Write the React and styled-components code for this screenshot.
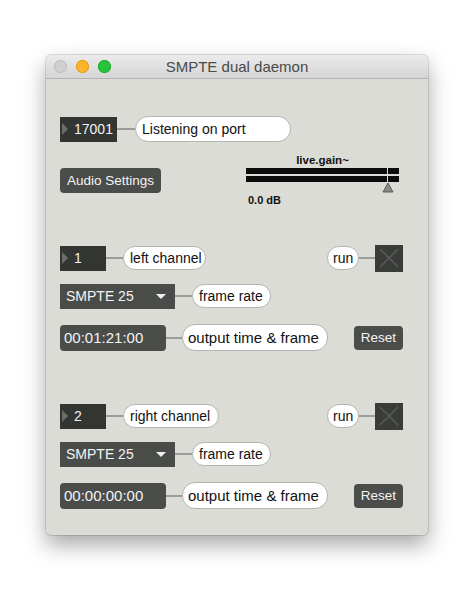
import styled, { createGlobalStyle } from 'styled-components';

const Global = createGlobalStyle`
  html, body {
    margin: 0;
    padding: 0;
    background: #ffffff;
    font-family: "Liberation Sans", Arial, sans-serif;
  }
`

const Page = styled.div`
  width: 474px;
  height: 590px;
  padding-top: 55px;
  box-sizing: border-box;
  display: flex;
  justify-content: center;
`

const Window = styled.div`
  width: 382px;
  height: 480px;
  border-radius: 5px;
  overflow: hidden;
  background: #dcdcd6;
  box-shadow: 0 10px 22px rgba(0,0,0,0.35), 0 0 0 1px rgba(0,0,0,0.12);
  display: flex;
  flex-direction: column;
`

const TitleBar = styled.div`
  height: 23px;
  flex-shrink: 0;
  background: linear-gradient(#ebebeb, #d5d5d5);
  border-bottom: 1px solid #b3b3b3;
  position: relative;
  display: flex;
  align-items: center;
  justify-content: center;
  color: #4a4a4a;
  font-size: 15px;
`

const Lights = styled.div`
  position: absolute;
  left: 8px;
  top: 5px;
  display: flex;
  gap: 9px;
`

const Light = styled.span`
  width: 13px;
  height: 13px;
  border-radius: 50%;
  background: ${p => p.color};
  box-shadow: inset 0 0 0 1px ${p => p.edge};
`

const Content = styled.div`
  flex: 1;
  padding: 37px 25px 0 14px;
  display: flex;
  flex-direction: column;
`

const Row = styled.div`
  display: flex;
  align-items: center;
  height: ${p => p.h || 26}px;
  margin-top: ${p => p.mt || 0}px;
`

const Spacer = styled.div`
  flex: 1;
`

const NumBox = styled.div`
  width: ${p => p.w}px;
  height: ${p => p.h || 25}px;
  background: #333533;
  color: #f2f2f2;
  font-size: 14px;
  display: flex;
  align-items: center;
  box-sizing: border-box;
  padding-left: 2px;
  flex-shrink: 0;
  &::before {
    content: "";
    width: 0;
    height: 0;
    border-top: 6px solid transparent;
    border-bottom: 6px solid transparent;
    border-left: 6px solid #6c6e6c;
    margin-right: 6px;
  }
`

const Wire = styled.div`
  width: ${p => p.w}px;
  height: 2px;
  background: #9c9c98;
  flex-shrink: 0;
`

const Bubble = styled.div`
  width: ${p => p.w}px;
  height: ${p => p.h || 24}px;
  box-sizing: border-box;
  background: #ffffff;
  border: 1px solid #b4b4b0;
  border-radius: 13px;
  color: #111;
  font-size: ${p => p.fs || 14}px;
  display: flex;
  align-items: center;
  padding-left: ${p => p.pl || 6}px;
  flex-shrink: 0;
  white-space: nowrap;
`

const DarkButton = styled.div`
  width: ${p => p.w}px;
  height: ${p => p.h || 25}px;
  background: #4b4d4b;
  border-radius: 4px;
  color: #f4f4f4;
  font-size: ${p => p.fs || 14}px;
  display: flex;
  align-items: center;
  justify-content: ${p => p.left ? 'flex-start' : 'center'};
  padding-left: ${p => p.left ? 4 : 0}px;
  margin-top: ${p => p.mt || 0}px;
  box-sizing: border-box;
  flex-shrink: 0;
  white-space: nowrap;
`

const Menu = styled.div`
  width: 115px;
  height: 25px;
  background: #4a4c4a;
  color: #f4f4f4;
  font-size: 14px;
  display: flex;
  align-items: center;
  justify-content: space-between;
  padding: 0 9px 0 6px;
  box-sizing: border-box;
  flex-shrink: 0;
`

const Caret = styled.span`
  width: 0;
  height: 0;
  border-left: 5px solid transparent;
  border-right: 5px solid transparent;
  border-top: 5px solid #f0f0f0;
`

const Toggle = styled.div`
  width: 28px;
  height: 27px;
  background: #3a3c3a;
  display: flex;
  align-items: center;
  justify-content: center;
  flex-shrink: 0;
`

const GainRow = styled.div`
  display: flex;
  align-items: flex-start;
  height: 60px;
  margin-top: 8px;
`

const GainBlock = styled.div`
  width: 153px;
  margin-left: 85px;
  display: flex;
  flex-direction: column;
`

const GainLabel = styled.div`
  text-align: center;
  font-size: 11.5px;
  font-weight: bold;
  color: #111;
  height: 14px;
  line-height: 14px;
  margin-top: 3px;
`

const Meter = styled.div`
  position: relative;
  height: 14px;
  margin-top: 1px;
  display: flex;
  flex-direction: column;
  justify-content: space-between;
`

const MeterBar = styled.div`
  height: 6px;
  background: #0c0c0c;
`

const Handle = styled.div`
  position: absolute;
  left: 141px;
  top: 0;
  width: 1px;
  height: 14px;
  background: #dcdcd6;
`

const Pointer = styled.div`
  height: 11px;
`

const DbText = styled.div`
  font-size: 11px;
  font-weight: bold;
  color: #111;
  margin-left: 2px;
  margin-top: 1px;
`

const Section = styled.div`
  display: flex;
  flex-direction: column;
  margin-top: ${p => p.mt}px;
`

function Channel({ num, label, labelWidth, time, mt }) {
  return (
    <Section mt={mt}>
      <Row h={26}>
        <NumBox w={46}>{num}</NumBox>
        <Wire w={17} />
        <Bubble w={labelWidth} pl={6}>{label}</Bubble>
        <Spacer />
        <Bubble w={32} pl={5}>run</Bubble>
        <Wire w={16} />
        <Toggle>
          <svg width="22" height="22" viewBox="0 0 22 22">
            <path d="M2 2 L20 20 M20 2 L2 20" stroke="#585a58" strokeWidth="1.6" />
          </svg>
        </Toggle>
      </Row>
      <Row h={26} mt={12}>
        <Menu>SMPTE 25<Caret /></Menu>
        <Wire w={17} />
        <Bubble w={79} pl={6}>frame rate</Bubble>
      </Row>
      <Row h={27} mt={15}>
        <DarkButton w={106} h={26} fs={15} left>{time}</DarkButton>
        <Wire w={16} />
        <Bubble w={146} h={27} fs={15} pl={5}>output time &amp; frame</Bubble>
        <Spacer />
        <DarkButton w={49} h={24} fs={13.5}>Reset</DarkButton>
      </Row>
    </Section>
  )
}

export default function App() {
  return (
    <Page>
      <Global />
      <Window>
        <TitleBar>
          <Lights>
            <Light color="#d0d0d0" edge="#bdbdbd" />
            <Light color="#fdb42b" edge="#e09c1e" />
            <Light color="#28c33c" edge="#1ea92f" />
          </Lights>
          SMPTE dual daemon
        </TitleBar>
        <Content>
          <Row h={26}>
            <NumBox w={57}>17001</NumBox>
            <Wire w={18} />
            <Bubble w={156} h={26} pl={6}>Listening on port</Bubble>
          </Row>
          <GainRow>
            <DarkButton w={101} h={25} fs={13.5} mt={18}>Audio Settings</DarkButton>
            <GainBlock>
              <GainLabel>live.gain~</GainLabel>
              <Meter>
                <MeterBar />
                <MeterBar />
                <Handle />
              </Meter>
              <Pointer>
                <svg width="153" height="11" viewBox="0 0 153 11" style={{ display: 'block' }}>
                  <polygon points="142,1 137,10 147,10" fill="#8a8c88" stroke="#444" strokeWidth="0.8" />
                </svg>
              </Pointer>
              <DbText>0.0 dB</DbText>
            </GainBlock>
          </GainRow>
          <Channel num="1" label="left channel" labelWidth={83} time="00:01:21:00" mt={35} />
          <Channel num="2" label="right channel" labelWidth={96} time="00:00:00:00" mt={52} />
        </Content>
      </Window>
    </Page>
  )
}
